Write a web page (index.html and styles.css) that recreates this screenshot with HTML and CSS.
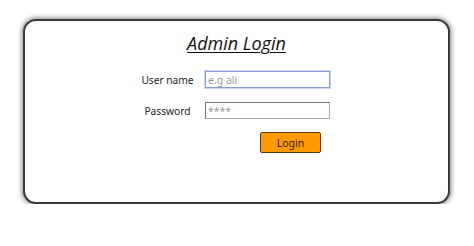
FILE: index.html
```html
<!DOCTYPE html>
<html>
<head>
<meta charset="utf-8">
<link rel="stylesheet" href="styles.css">
</head>
<body>
<div class="card">
  <h1 class="title">Admin Login</h1>
  <form class="form">
    <label class="label" for="u">User name</label>
    <input class="field focused" id="u" type="text" placeholder="e.g ali">
    <label class="label" for="p">Password</label>
    <input class="field" id="p" type="text" placeholder="****">
    <span></span>
    <div class="actions"><button type="button" class="btn">Login</button></div>
  </form>
</div>
</body>
</html>
```
FILE: styles.css
```css
html, body { margin: 0; padding: 0; background: #fff; }
body { font-family: "Noto Sans", "DejaVu Sans", sans-serif; color: #222; }
.card {
  box-sizing: border-box;
  margin: 19px 0 0 23px;
  width: 427px;
  height: 185px;
  border: 2px solid #3a3a3a;
  border-radius: 13px;
  box-shadow: 0 0 5px 1px rgba(0,0,0,0.5);
  background: #fff;
}
.title {
  margin: 10px 0 0 0;
  text-align: center;
  font-family: "Open Sans", sans-serif;
  font-style: italic;
  font-weight: 400;
  font-size: 18px;
  line-height: 24px;
  text-decoration: underline;
  text-decoration-thickness: 1px;
  text-underline-offset: 2px;
  color: #111;
}
.form {
  display: grid;
  grid-template-columns: 75px 125px;
  row-gap: 14px;
  margin: 16px 0 0 105px;
  align-items: center;
}
.label {
  text-align: center;
  font-size: 10.2px;
  color: #222;
}
.field {
  box-sizing: border-box;
  width: 125px;
  height: 17px;
  margin: 0;
  padding: 0 2px;
  border: 1px solid #aaa;
  border-top-color: #777;
  border-left-color: #777;
  font-family: "Noto Sans", sans-serif;
  font-size: 10.5px;
  background: #fff;
}
.field::placeholder { color: #999; }
.field.focused { border: 1px solid #8aa0d0; box-shadow: 0 0 0 1px #c8d4ee; }
.actions { padding-left: 55px; margin-top: -1px; }
.btn {
  box-sizing: border-box;
  display: block;
  width: 61px;
  height: 21px;
  background: #ff9900;
  border: 1px solid #5c3d08;
  border-radius: 2px;
  font-family: "Noto Sans", sans-serif;
  font-size: 10.5px;
  color: #2a1a00;
  padding: 0;
}
```
